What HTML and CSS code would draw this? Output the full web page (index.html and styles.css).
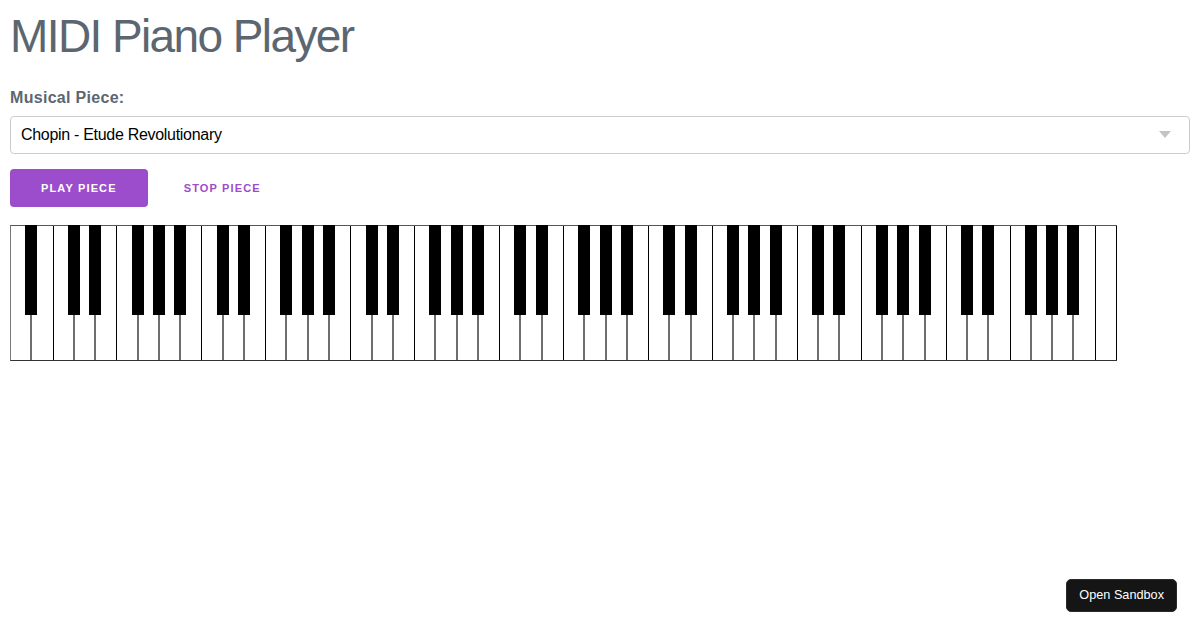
FILE: index.html
```html
<!DOCTYPE html>
<html>
<head>
<meta charset="utf-8">
<title>MIDI Piano Player</title>
<link rel="stylesheet" href="styles.css">
</head>
<body>
<main class="app">
  <h1 class="title">MIDI Piano Player</h1>
  <label class="field-label" for="piece">Musical Piece:</label>
  <div class="select-wrap">
    <select id="piece" class="select">
      <option>Chopin - Etude Revolutionary</option>
    </select>
    <span class="select-arrow"></span>
  </div>
  <div class="actions">
    <button class="btn btn-primary">Play Piece</button>
    <button class="btn btn-text">Stop Piece</button>
  </div>
  <div class="piano">
    <div class="w b"></div><div class="w"></div>
    <div class="w b"></div><div class="w b"></div><div class="w"></div><div class="w b"></div><div class="w b"></div><div class="w b"></div><div class="w"></div>
    <div class="w b"></div><div class="w b"></div><div class="w"></div><div class="w b"></div><div class="w b"></div><div class="w b"></div><div class="w"></div>
    <div class="w b"></div><div class="w b"></div><div class="w"></div><div class="w b"></div><div class="w b"></div><div class="w b"></div><div class="w"></div>
    <div class="w b"></div><div class="w b"></div><div class="w"></div><div class="w b"></div><div class="w b"></div><div class="w b"></div><div class="w"></div>
    <div class="w b"></div><div class="w b"></div><div class="w"></div><div class="w b"></div><div class="w b"></div><div class="w b"></div><div class="w"></div>
    <div class="w b"></div><div class="w b"></div><div class="w"></div><div class="w b"></div><div class="w b"></div><div class="w b"></div><div class="w"></div>
    <div class="w b"></div><div class="w b"></div><div class="w"></div><div class="w b"></div><div class="w b"></div><div class="w b"></div><div class="w"></div>
    <div class="w"></div>
  </div>
</main>
<a class="sandbox-btn" href="#">Open Sandbox</a>
</body>
</html>
```

FILE: styles.css
```css
* { box-sizing: border-box; }

html, body {
  margin: 0;
  background: #ffffff;
}

body {
  padding: 0 10px;
  font-family: "Liberation Sans", Arial, sans-serif;
  color: #000;
}

.app {
  display: flex;
  flex-direction: column;
  align-items: flex-start;
}

.title {
  margin: 13px 0 0;
  font-size: 46px;
  line-height: 47px;
  font-weight: 400;
  letter-spacing: -1.6px;
  color: #5c6670;
}

.field-label {
  margin-top: 29px;
  font-size: 16px;
  line-height: 18px;
  font-weight: 700;
  letter-spacing: 0.3px;
  color: #5c6670;
}

.select-wrap {
  position: relative;
  width: 100%;
  margin-top: 9px;
}

.select {
  display: block;
  width: 100%;
  height: 38px;
  margin: 0;
  padding: 0 40px 0 10px;
  border: 1px solid #cccccc;
  border-radius: 4px;
  background: #ffffff;
  font-family: "Liberation Sans", Arial, sans-serif;
  font-size: 16px;
  line-height: 36px;
  letter-spacing: -0.3px;
  color: #000;
  -webkit-appearance: none;
  appearance: none;
  outline: none;
}

.select-arrow {
  position: absolute;
  right: 19px;
  top: 15px;
  width: 0;
  height: 0;
  border-left: 6px solid transparent;
  border-right: 6px solid transparent;
  border-top: 7px solid #c4c4c4;
  pointer-events: none;
}

.actions {
  display: flex;
  align-items: center;
  margin-top: 15px;
}

.btn {
  height: 38px;
  padding: 0 31px;
  border: none;
  border-radius: 4px;
  font-family: "Liberation Sans", Arial, sans-serif;
  font-size: 11px;
  font-weight: 700;
  letter-spacing: 1.15px;
  text-transform: uppercase;
  cursor: pointer;
}

.btn-primary {
  background: #9c4dcc;
  color: #ffffff;
}

.btn-text {
  margin-left: 5px;
  background: transparent;
  color: #9c4dcc;
}

.piano {
  display: grid;
  grid-template-columns: repeat(52, 1fr);
  width: 1107px;
  height: 136px;
  margin-top: 18px;
  border-top: 1px solid #555;
  border-bottom: 1px solid #333;
  border-left: 1px solid #777;
}

.w {
  position: relative;
  background: #ffffff;
  border-right: 1px solid #000;
}

.w.b {
  border-right: 2px solid #6e6e6e;
}

.w.b::after {
  content: "";
  position: absolute;
  top: -1px;
  right: -7px;
  width: 12px;
  height: 90px;
  background: #000;
  z-index: 1;
}

.sandbox-btn {
  position: fixed;
  right: 23px;
  bottom: 18px;
  height: 33px;
  padding: 0 12px;
  border-radius: 5px;
  background: #151515;
  border: 1px solid #2a2a2a;
  color: #ffffff;
  font-family: "Liberation Sans", Arial, sans-serif;
  font-size: 12.7px;
  line-height: 31px;
  text-decoration: none;
}
```
